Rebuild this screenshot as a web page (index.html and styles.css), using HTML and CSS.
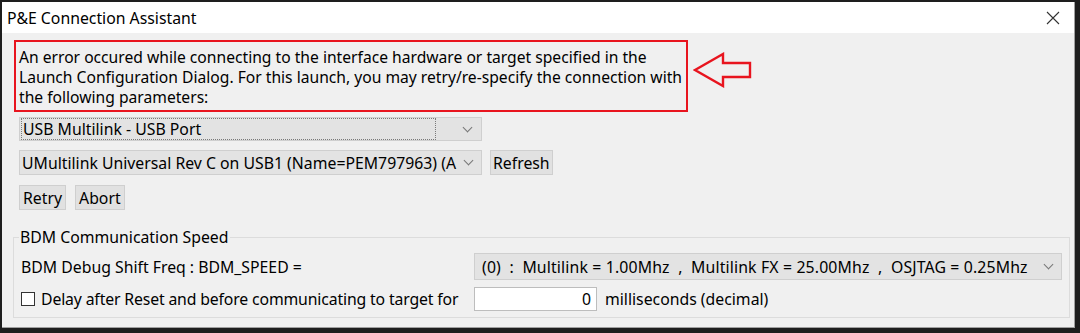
FILE: index.html
```html
<!DOCTYPE html>
<html>
<head>
<meta charset="utf-8">
<link rel="stylesheet" href="styles.css">
</head>
<body>
<div class="window">
  <div class="titlebar">
    <span class="title">P&amp;E Connection Assistant</span>
    <svg class="close" width="14" height="14" viewBox="0 0 14 14"><path d="M1 1 L13 13 M13 1 L1 13" stroke="#333" stroke-width="1.1" fill="none"/></svg>
  </div>
  <div class="content">
    <div class="msgrow">
      <div class="message"><span class="ln">An error occured while connecting to the interface hardware or target specified in the</span><span class="ln">Launch Configuration Dialog. For this launch, you may retry/re-specify the connection with</span><span class="ln">the following parameters:</span></div>
      <svg class="arrow" width="60" height="36" viewBox="0 0 60 36"><path d="M2 18 L30 2 L30 11 L57 11 L57 25 L30 25 L30 34 Z" fill="none" stroke="#e8141e" stroke-width="2.4" stroke-linejoin="miter"/></svg>
    </div>
    <div class="controls">
      <div class="combo c1"><span class="focus">USB Multilink - USB Port</span><span class="chev"></span></div>
      <div class="row">
        <div class="combo c2"><span class="val">UMultilink Universal Rev C on USB1 (Name=PEM797963) (A</span><span class="chev"></span></div>
        <div class="btn refresh">Refresh</div>
      </div>
      <div class="row btns">
        <div class="btn">Retry</div>
        <div class="btn">Abort</div>
      </div>
    </div>
    <fieldset class="group">
      <legend>BDM Communication Speed</legend>
      <div class="grid">
        <div class="lbl">BDM Debug Shift Freq : BDM_SPEED =</div>
        <div class="combo c3"><span class="val">(0)&nbsp; :&nbsp; Multilink = 1.00Mhz&nbsp; ,&nbsp; Multilink FX = 25.00Mhz&nbsp; ,&nbsp; OSJTAG = 0.25Mhz</span><span class="chev"></span></div>
        <div class="lbl chk"><span class="box"></span><span class="dl">Delay after Reset and before communicating to target for</span></div>
        <div class="inrow"><div class="input">0</div><span>milliseconds (decimal)</span></div>
      </div>
    </fieldset>
  </div>
</div>
</body>
</html>
```

FILE: styles.css
```css
html, body {
  margin: 0;
  padding: 0;
}
body {
  width: 1080px;
  height: 333px;
  overflow: hidden;
  background: #1e1e1e;
  font-family: "Noto Sans", "Open Sans", sans-serif;
  font-size: 15.8px;
  color: #000;
}
.window {
  margin: 2px 0 0 2px;
  width: 1072px;
  height: 325px;
  background: #f0f0f0;
  border-right: 1px solid #a0a0a0;
  border-bottom: 1px solid #a0a0a0;
  display: flex;
  flex-direction: column;
}
.titlebar {
  height: 31px;
  background: #fff;
  display: flex;
  align-items: center;
  justify-content: space-between;
  padding: 0 14px 0 5px;
}
.close { margin-top: 1px; }
.content {
  padding: 7px 0 0 12px;
  display: flex;
  flex-direction: column;
}
.msgrow {
  display: flex;
  align-items: center;
  gap: 5px;
}
.message {
  box-sizing: border-box;
  width: 674px;
  height: 72px;
  border: 2px solid #e8141e;
  padding: 5px 3px 0 3px;
  line-height: 20px;
  font-size: 15.65px;
  display: flex;
  flex-direction: column;
}
.ln { white-space: nowrap; }
.arrow { margin-top: -12px; }
.controls {
  padding: 5px 0 0 5px;
  display: flex;
  flex-direction: column;
  gap: 9px;
}
.row {
  display: flex;
  gap: 8px;
}
.btns { gap: 9px; margin-top: 1px; }
.combo {
  box-sizing: border-box;
  background: #e3e3e3;
  border: 1px solid #cfcfcf;
  display: flex;
  align-items: center;
}
.c1 { width: 463px; height: 24px; padding: 1px; }
.c1 .focus {
  flex: 1;
  height: 20px;
  border: 1px dotted #7a7a7a;
  padding-left: 1px;
  line-height: 20px;
  margin-right: 22px;
}
.c2 { width: 463px; height: 25px; padding-left: 2px; }
.c3 { width: 588px; height: 27px; padding-left: 7px; letter-spacing: 0.15px; }
.val { flex: 1; white-space: nowrap; overflow: hidden; }
.chev {
  width: 6px;
  height: 6px;
  border-right: 1px solid #777;
  border-bottom: 1px solid #777;
  transform: rotate(45deg);
  margin: -4px 9px 0 6px;
}
.btn {
  box-sizing: border-box;
  height: 25px;
  background: #e1e1e1;
  border: 1px solid #cfcfcf;
  padding: 0 3px;
  display: flex;
  align-items: center;
}
.refresh { padding: 0 2px; }
.group {
  margin: 16px 0 0 -1px;
  width: 1057px;
  box-sizing: border-box;
  height: 92px;
  border: 1px solid #dcdcdc;
  padding: 5px 7px 0 7px;
}
.group legend {
  padding: 0 1px;
  margin-left: -2px;
}
.grid {
  display: grid;
  grid-template-columns: 453px 1fr;
  row-gap: 7px;
  align-items: center;
}
.lbl { white-space: nowrap; }
.chk { display: flex; align-items: center; gap: 6px; }
.dl { letter-spacing: -0.15px; }
.box {
  width: 12px;
  height: 12px;
  background: #fff;
  border: 1px solid #333;
}
.inrow {
  display: flex;
  align-items: center;
  gap: 8px;
}
.input {
  box-sizing: border-box;
  width: 123px;
  height: 24px;
  background: #fff;
  border: 1px solid #bdbdbd;
  text-align: right;
  padding-right: 5px;
  line-height: 22px;
}
```
